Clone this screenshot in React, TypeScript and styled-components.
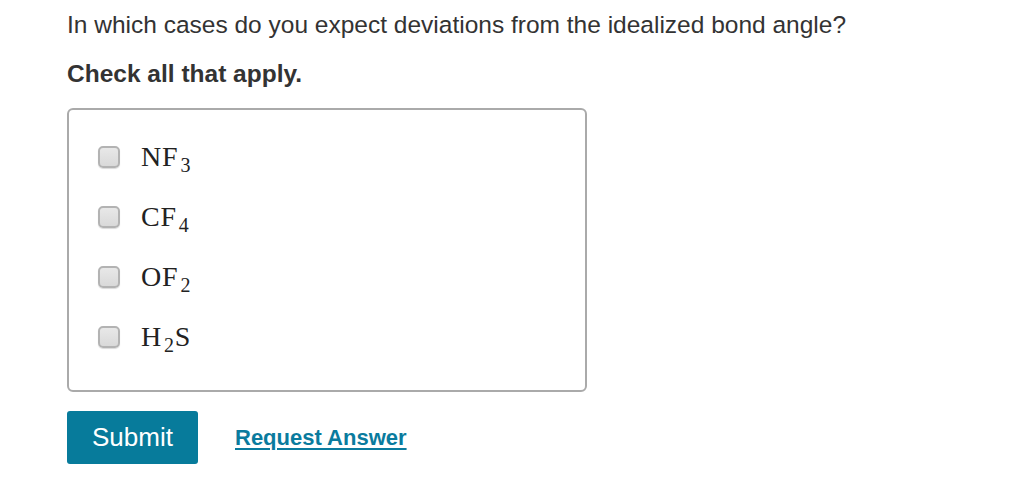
import React from "react";
import styled, { createGlobalStyle } from "styled-components";

const colors = {
    text: "#333333",
    border: "#aaaaaa",
    teal: "#077b9b",
    link: "#0a7b9e",
};

const GlobalStyle = createGlobalStyle`
    body {
        margin: 0;
        background: #ffffff;
        font-family: "Liberation Sans", Arial, sans-serif;
        color: ${colors.text};
    }
`;

const Page = styled.div`
    padding: 9px 0 0 67px;
`;

const Question = styled.p`
    margin: 0;
    font-size: 24.5px;
    line-height: 32px;
`;

const Instruction = styled.p`
    margin: 18px 0 0;
    font-size: 24.5px;
    line-height: 30px;
    font-weight: 700;
`;

const ChoiceBox = styled.div`
    box-sizing: border-box;
    width: 520px;
    height: 284px;
    margin-top: 19px;
    padding: 32px 0 0 29px;
    border: 2px solid ${colors.border};
    border-radius: 6px;
    display: flex;
    flex-direction: column;
    gap: 30px;
`;

const Choice = styled.label`
    display: flex;
    align-items: center;
    gap: 21px;
    height: 30px;
    cursor: pointer;
`;

const Box = styled.span`
    box-sizing: border-box;
    width: 22px;
    height: 22px;
    border: 2px solid #b3b3b3;
    border-radius: 5px;
    background: linear-gradient(#e8e8e8, #d9d9d9);
    box-shadow: 0 1px 1px rgba(0, 0, 0, 0.15);
`;

const Formula = styled.span`
    font-family: "Liberation Serif", "Times New Roman", serif;
    font-size: 28px;
    color: #222222;
    letter-spacing: 0.8px;
`;

const Sub = styled.sub`
    font-size: 20px;
    vertical-align: -6px;
    line-height: 0;
    margin-left: 2px;
`;

const Actions = styled.div`
    display: flex;
    align-items: center;
    gap: 37px;
    margin-top: 19px;
`;

const SubmitButton = styled.button`
    width: 131px;
    height: 53px;
    border: none;
    border-radius: 3px;
    background: ${colors.teal};
    color: #ffffff;
    font-family: "Liberation Sans", Arial, sans-serif;
    font-size: 26px;
    cursor: pointer;
`;

const RequestLink = styled.a`
    font-size: 22px;
    font-weight: 700;
    color: ${colors.link};
    text-decoration: underline;
    text-underline-offset: 3px;
    cursor: pointer;
`;

type Part = { text: string; sub?: boolean };

const choices: { key: string; parts: Part[] }[] = [
    { key: "nf3", parts: [{ text: "NF" }, { text: "3", sub: true }] },
    { key: "cf4", parts: [{ text: "CF" }, { text: "4", sub: true }] },
    { key: "of2", parts: [{ text: "OF" }, { text: "2", sub: true }] },
    { key: "h2s", parts: [{ text: "H" }, { text: "2", sub: true }, { text: "S" }] },
];

const App = () => (
    <Page>
        <GlobalStyle />
        <Question>In which cases do you expect deviations from the idealized bond angle?</Question>
        <Instruction>Check all that apply.</Instruction>
        <ChoiceBox>
            {choices.map((choice) => (
                <Choice key={choice.key}>
                    <Box />
                    <Formula>
                        {choice.parts.map((part, i) =>
                            part.sub ? <Sub key={i}>{part.text}</Sub> : <span key={i}>{part.text}</span>
                        )}
                    </Formula>
                </Choice>
            ))}
        </ChoiceBox>
        <Actions>
            <SubmitButton>Submit</SubmitButton>
            <RequestLink>Request Answer</RequestLink>
        </Actions>
    </Page>
);

export default App;
